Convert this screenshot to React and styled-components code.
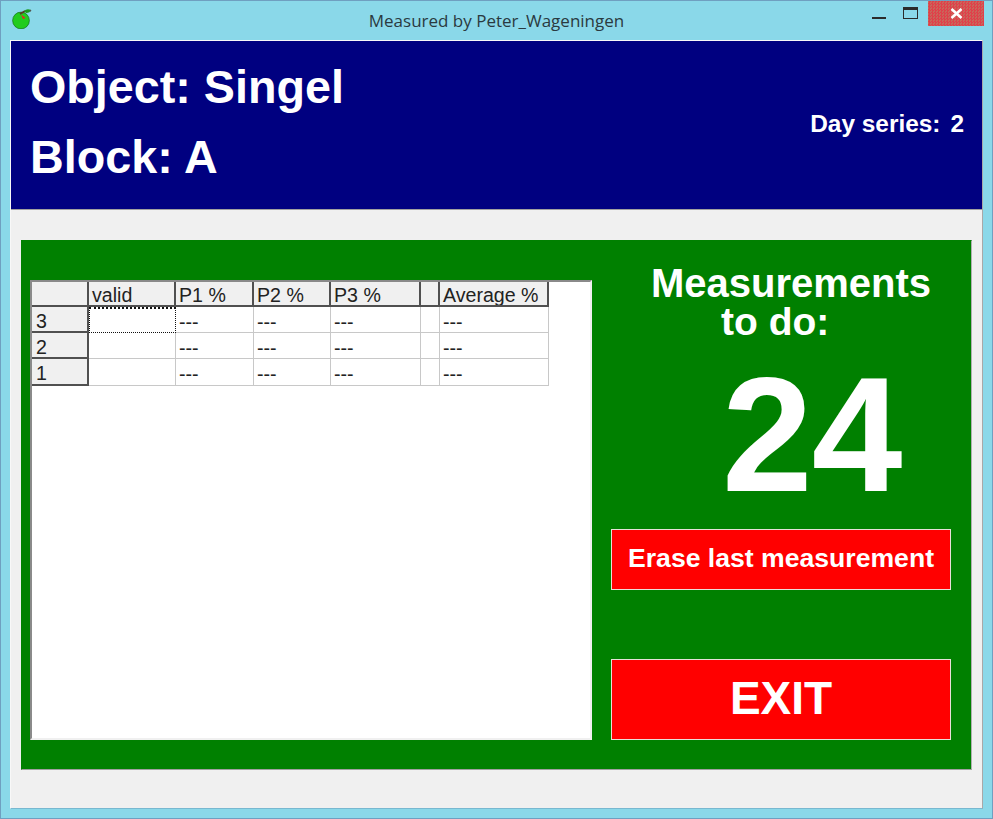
import React from 'react';
import styled, { createGlobalStyle } from 'styled-components';

const rows = ['3', '2', '1'];
const headers = ['valid', 'P1 %', 'P2 %', 'P3 %', '', 'Average %'];

const GlobalStyle = createGlobalStyle`
    html, body {
        margin: 0;
        padding: 0;
        background: #8ad8e9;
    }
`;

const AppleIcon = () => (
    <svg width="22" height="22" viewBox="0 0 22 22">
        <circle cx="11" cy="13.5" r="8.4" fill="#22cc1e" stroke="#0d5e0d" strokeWidth="0.6" />
        <path d="M10 7 L15 4" fill="none" stroke="#5a3a20" strokeWidth="1.8" />
        <path d="M14 4 Q17 1 21 3 Q20 6 16 6 Z" fill="#1c9a1c" />
        <path d="M20 2.5 L21.5 3.5 L20 5 Z" fill="#555" />
        <path d="M11 7.5 L15.5 11 L13 12 Z" fill="#f02020" />
    </svg>
);

const App = () => {
    return (
        <StWindow>
            <GlobalStyle />
            <StTitleBar>
                <StAppIcon>
                    <AppleIcon />
                </StAppIcon>
                <StTitle>Measured by Peter_Wageningen</StTitle>
                <StControls>
                    <StMinimize />
                    <StMaximize />
                    <StClose>
                        <svg width="13" height="11" viewBox="0 0 13 11">
                            <path d="M1.5 1 L11.5 10 M11.5 1 L1.5 10" stroke="white" strokeWidth="2.6" />
                        </svg>
                    </StClose>
                </StControls>
            </StTitleBar>
            <StClient>
                <StHeader>
                    <StHeaderLeft>
                        <StHeading>Object: Singel</StHeading>
                        <StHeading>Block: A</StHeading>
                    </StHeaderLeft>
                    <StDaySeries>
                        Day series:<StDayValue>2</StDayValue>
                    </StDaySeries>
                </StHeader>
                <StPanel>
                    <StTableBox>
                        <StGrid>
                            <StCorner />
                            {headers.map((h, i) => (
                                <StColHead key={i}>{h}</StColHead>
                            ))}
                            {rows.map((r, ri) => (
                                <React.Fragment key={r}>
                                    <StRowHead>{r}</StRowHead>
                                    {headers.map((h, i) => (
                                        <StCell key={i} $focused={ri === 0 && i === 0}>
                                            {i === 0 || i === 4 ? '' : '---'}
                                        </StCell>
                                    ))}
                                </React.Fragment>
                            ))}
                        </StGrid>
                    </StTableBox>
                    <StSide>
                        <StMeasureLabel>Measurements</StMeasureLabel>
                        <StToDoLabel>to do:</StToDoLabel>
                        <StCount>24</StCount>
                        <StEraseButton>Erase last measurement</StEraseButton>
                        <StExitButton>EXIT</StExitButton>
                    </StSide>
                </StPanel>
            </StClient>
        </StWindow>
    );
};

export default App;

const StWindow = styled.div`
    width: 993px;
    height: 819px;
    box-sizing: border-box;
    padding: 0 9px 9px;
    display: flex;
    flex-direction: column;
    overflow: hidden;
    background: #8ad8e9;
    border: 1px solid #6f9fc0;
    font-family: 'Liberation Sans', Arial, sans-serif;
`;

const StTitleBar = styled.div`
    height: 39px;
    display: flex;
    position: relative;
    flex-shrink: 0;
    justify-content: center;
    margin: 0 -9px;
`;

const StAppIcon = styled.div`
    position: absolute;
    left: 9px;
    top: 6px;
    width: 22px;
    height: 22px;
`;

const StTitle = styled.div`
    margin-top: 10px;
    font-family: 'Open Sans', 'Noto Sans', sans-serif;
    font-size: 17px;
    line-height: 20px;
    color: #2a3a40;
`;

const StControls = styled.div`
    position: absolute;
    right: 8px;
    top: 0;
    display: flex;
    align-items: flex-start;
`;

const StMinimize = styled.div`
    width: 14px;
    height: 2px;
    margin: 16px 17px 0 0;
    background: #2b2b2b;
`;

const StMaximize = styled.div`
    width: 15px;
    height: 12px;
    box-sizing: border-box;
    margin: 6px 10px 0 0;
    border: 1px solid #2b2b2b;
    border-top-width: 3px;
`;

const StClose = styled.div`
    width: 56px;
    height: 25px;
    display: flex;
    align-items: center;
    justify-content: center;
    background: repeating-conic-gradient(#e0404a 0 25%, #c8665a 0 50%) 0 0 / 3px 3px;
`;

const StClient = styled.div`
    flex: 1;
    background: #f0f0f0;
    display: flex;
    flex-direction: column;
    border: 1px solid #f8f8f8;
    border-bottom-color: #78b8d0;
    border-right-color: #a8a8a8;
`;

const StHeader = styled.div`
    height: 168px;
    flex-shrink: 0;
    background: #000080;
    display: flex;
    justify-content: space-between;
    align-items: center;
    padding: 0 18px 0 19px;
    color: white;
    border-bottom: 1px solid #a0a0a0;
`;

const StHeaderLeft = styled.div`
    display: flex;
    flex-direction: column;
    gap: 20px;
    margin-top: -6px;
`;

const StHeading = styled.div`
    font-size: 46.7px;
    font-weight: bold;
    line-height: 50px;
`;

const StDaySeries = styled.div`
    font-size: 24.4px;
    font-weight: bold;
    line-height: 28px;
    margin-top: -3px;
`;

const StDayValue = styled.span`
    margin-left: 10px;
`;

const StPanel = styled.div`
    margin: 30px 10px 0 10px;
    height: 530px;
    box-sizing: border-box;
    background: #008000;
    display: flex;
    padding: 39px 0 0 8px;
    border: 1px solid #008000;
    border-right-color: #b0b0b0;
    border-bottom-color: #a0a0a0;
`;

const StTableBox = styled.div`
    width: 562px;
    height: 460px;
    box-sizing: border-box;
    flex-shrink: 0;
    background: white;
    border: 2px solid #8a8a8a;
    border-right: 2px solid #f0f0f0;
    border-bottom: 2px solid #f0f0f0;
`;

const StGrid = styled.div`
    display: grid;
    grid-template-columns: 57px 87px 78px 77px 90px 19px 109px;
    grid-template-rows: 25px 26px 26px 27px;
    width: max-content;
    font-size: 19.6px;
    color: #222;
`;

const StCorner = styled.div`
    background: #f0f0f0;
    border-right: 2px solid #505050;
    border-bottom: 2px solid #505050;
    box-sizing: border-box;
`;

const StColHead = styled(StCorner)`
    padding: 3px 0 0 3px;
    line-height: 20px;
    white-space: nowrap;
    overflow: hidden;
`;

const StRowHead = styled(StCorner)`
    padding: 5px 0 0 4px;
    line-height: 19px;
`;

const StCell = styled.div`
    box-sizing: border-box;
    background: white;
    padding: 6px 0 0 3px;
    line-height: 19px;
    border-right: 1px solid #c8c8c8;
    border-bottom: 1px solid #c8c8c8;
    ${(props) => props.$focused && 'border: 1px dotted #111; border-top-width: 2px;'}
`;

const StSide = styled.div`
    flex: 1;
    display: flex;
    flex-direction: column;
    padding-left: 19px;
    color: white;
    font-weight: bold;
`;

const StMeasureLabel = styled.div`
    font-size: 40px;
    line-height: 40px;
    margin: -17px 0 0 40px;
    white-space: nowrap;
`;

const StToDoLabel = styled.div`
    font-size: 39px;
    line-height: 38px;
    margin: 0 0 0 110px;
`;

const StCount = styled.div`
    font-size: 163px;
    line-height: 150px;
    margin: 19px 0 0 111px;
    letter-spacing: -1px;
`;

const StButton = styled.button`
    width: 340px;
    box-sizing: border-box;
    background: #ff0000;
    color: white;
    font-family: inherit;
    font-weight: bold;
    border: 1px solid #e8e0d8;
    padding: 0 0 3px;
`;

const StEraseButton = styled(StButton)`
    height: 61px;
    margin-top: 19px;
    font-size: 26.6px;
`;

const StExitButton = styled(StButton)`
    height: 81px;
    margin-top: 69px;
    font-size: 46px;
`;
